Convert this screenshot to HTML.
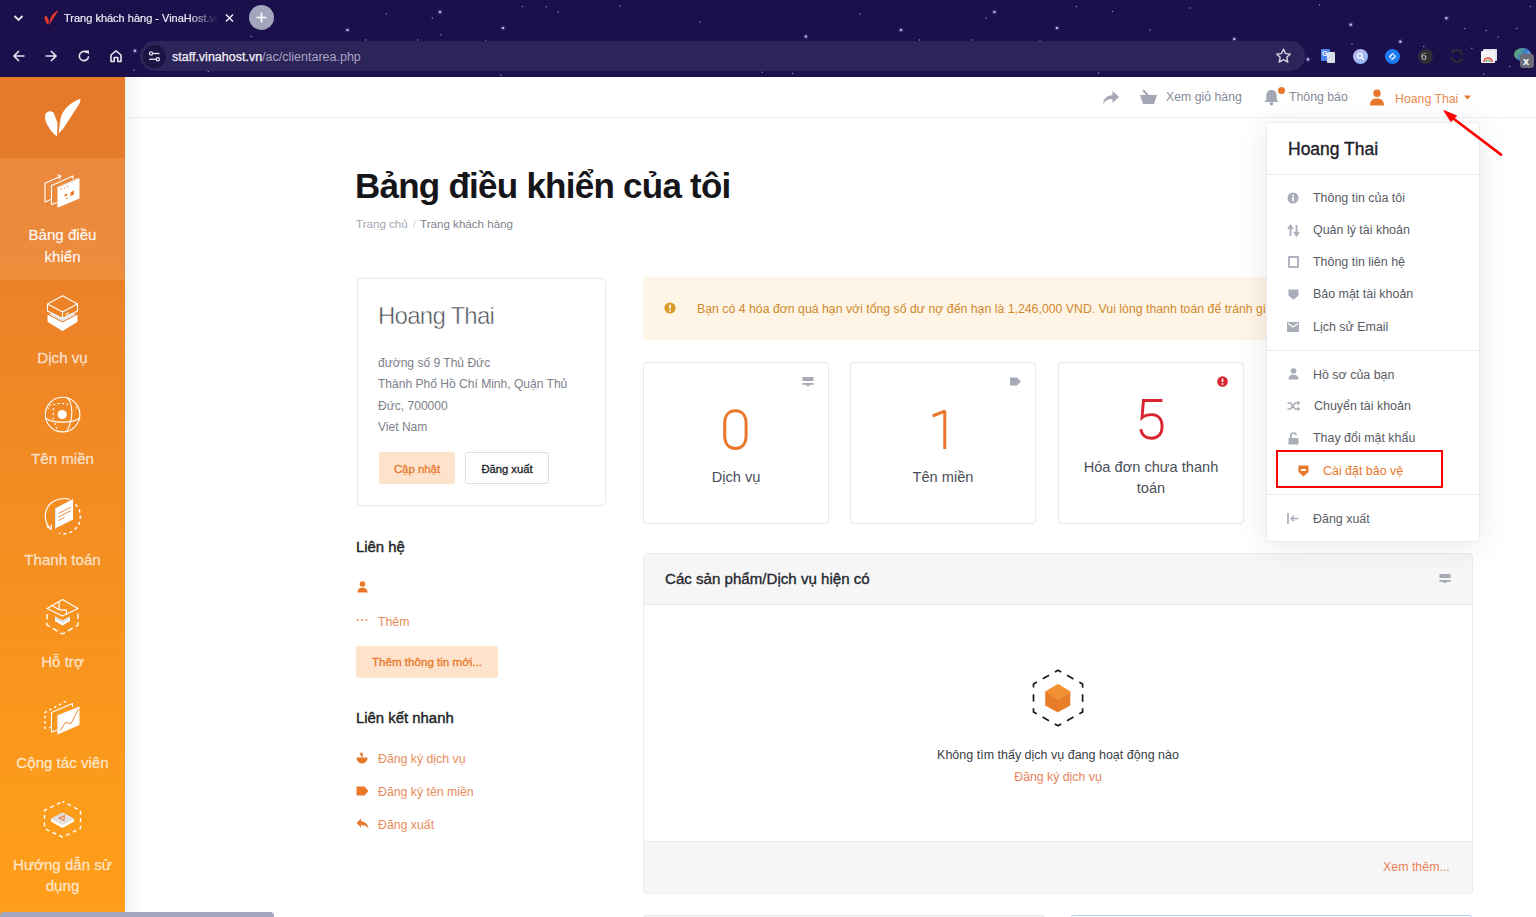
<!DOCTYPE html>
<html><head><meta charset="utf-8">
<style>
*{box-sizing:border-box;margin:0;padding:0}
html,body{width:1536px;height:917px;overflow:hidden;background:#fff;font-family:"Liberation Sans",sans-serif;position:relative}
.a{position:absolute}
.nw{white-space:nowrap}
svg{display:block}
/* chrome */
#chrome{left:0;top:0;width:1536px;height:77px;background:#1b104b}
#omni{left:140px;top:41px;width:1165px;height:30px;border-radius:15px;background:#2d2459}
/* sidebar */
#side{left:0;top:77px;width:125px;height:840px;background:linear-gradient(#e77a2c 0px,#ec8128 200px,#f38c22 420px,#fc9a1b 700px,#ff9e19 840px)}
.sl{left:0;width:125px;text-align:center;color:rgba(255,255,255,.72);-webkit-text-stroke:.35px rgba(255,255,255,.55);font-size:15.1px;line-height:22px;white-space:nowrap}
/* header */
#hdr{left:125px;top:77px;width:1411px;height:41px;background:#fff;border-bottom:1px solid #eceef2}
.ht{font-size:12.3px;color:#868a98;line-height:14px}
.card{border:1px solid #e9eaee;border-radius:4px;background:#fff;position:absolute;box-shadow:0 0 1.5px rgba(60,70,90,.07)}
.t12{font-size:12px}
</style></head><body>
<!-- ============ BROWSER CHROME ============ -->
<div id="chrome" class="a"></div>
<!-- stars --><svg class="a" style="left:0;top:0" width="1536" height="77"><g fill="#3a3580" opacity=".8"><circle cx="440" cy="12" r="2.6"/><circle cx="347.5" cy="30" r="2.6"/><circle cx="503" cy="28" r="2.6"/><circle cx="901" cy="30" r="2.6"/><circle cx="994.4" cy="12" r="2.6"/><circle cx="1056.9" cy="28" r="2.6"/><circle cx="1350.8" cy="24.7" r="2.6"/><circle cx="1446.4" cy="18.2" r="2.6"/><circle cx="1400.3" cy="41.7" r="2.6"/><circle cx="1234.3" cy="39" r="2.6"/><circle cx="1307.9" cy="59.4" r="2.6"/><circle cx="805.9" cy="36.5" r="2.6"/><circle cx="134.9" cy="50.8" r="2.6"/></g><g fill="#d8dcff"><circle cx="440" cy="12" r="1.1"/><circle cx="347.5" cy="30" r="1.1"/><circle cx="503" cy="28" r="1.1"/><circle cx="901" cy="30" r="1.1"/><circle cx="994.4" cy="12" r="1.1"/><circle cx="1056.9" cy="28" r="1.1"/><circle cx="1350.8" cy="24.7" r="1.1"/><circle cx="1446.4" cy="18.2" r="1.1"/><circle cx="1400.3" cy="41.7" r="1.1"/><circle cx="1234.3" cy="39" r="1.1"/><circle cx="1307.9" cy="59.4" r="1.1"/><circle cx="805.9" cy="36.5" r="1.1"/><circle cx="134.9" cy="50.8" r="1.1"/></g><g fill="#8d8ac4"><circle cx="522.5" cy="6.5" r=".75"/><circle cx="432.3" cy="18" r=".75"/><circle cx="546.3" cy="6.8" r=".75"/><circle cx="558.3" cy="11.7" r=".75"/><circle cx="441" cy="34.8" r=".75"/><circle cx="365.6" cy="40" r=".75"/><circle cx="417.7" cy="40" r=".75"/><circle cx="485.7" cy="41" r=".75"/><circle cx="386.4" cy="14" r=".75"/><circle cx="500.7" cy="74.9" r=".75"/><circle cx="762.4" cy="72.3" r=".75"/><circle cx="1319.6" cy="4.7" r=".75"/><circle cx="1464.9" cy="28.6" r=".75"/><circle cx="1486.3" cy="30.5" r=".75"/><circle cx="1516.7" cy="28.6" r=".75"/><circle cx="1530.5" cy="6.5" r=".75"/><circle cx="1352" cy="43.8" r=".75"/><circle cx="1423.8" cy="46.4" r=".75"/><circle cx="1471.9" cy="48.2" r=".75"/><circle cx="1498" cy="37" r=".75"/><circle cx="1509.7" cy="66.4" r=".75"/><circle cx="1483.6" cy="74.2" r=".75"/><circle cx="251.3" cy="36.5" r=".75"/><circle cx="208.3" cy="71.6" r=".75"/><circle cx="134" cy="70.3" r=".75"/><circle cx="1076.4" cy="6.5" r=".75"/><circle cx="986.2" cy="18" r=".75"/><circle cx="919.5" cy="40" r=".75"/><circle cx="971.6" cy="40" r=".75"/><circle cx="1040" cy="41" r=".75"/><circle cx="1112.5" cy="11.4" r=".75"/><circle cx="792.6" cy="73.5" r=".75"/><circle cx="1098.5" cy="73" r=".75"/><circle cx="1190" cy="8" r=".75"/><circle cx="620" cy="6" r=".75"/><circle cx="700" cy="22" r=".75"/><circle cx="860" cy="14" r=".75"/><circle cx="1150" cy="30" r=".75"/></g></svg>
<!-- tab strip -->
<svg class="a" style="left:13px;top:13px" width="11" height="10" viewBox="0 0 11 10"><path d="M1.5 3 L5.5 7 L9.5 3" stroke="#e8e6f2" stroke-width="1.8" fill="none"/></svg>
<svg class="a" style="left:43px;top:9px" width="16" height="17" viewBox="0 0 16 17"><path d="M1.6 9.5 C1 7.5 2.6 6.4 3.9 7.2 L6 12.6 L5.3 16 C3.6 14.5 2.2 12 1.6 9.5Z M6.4 15.7 L7.2 10.5 C8 7 10.5 4 14.3 1.8 C14.8 1.6 15 2 14.7 2.6 Z" fill="#e8392b"/></svg>
<div class="a nw" style="left:64px;top:11px;font-size:11px;color:#eceaf4;-webkit-text-stroke:.2px #eceaf4;line-height:14px;width:154px;overflow:hidden;-webkit-mask-image:linear-gradient(90deg,#000 125px,transparent 154px)">Trang khách hàng - VinaHost.vn</div>
<svg class="a" style="left:225px;top:13px" width="9" height="10" viewBox="0 0 9 10"><path d="M1 1.5 L8 8.5 M8 1.5 L1 8.5" stroke="#eceaf4" stroke-width="1.5"/></svg>
<div class="a" style="left:249px;top:5px;width:25px;height:25px;border-radius:50%;background:#a3a5bd"></div>
<svg class="a" style="left:255px;top:11px" width="13" height="13" viewBox="0 0 13 13"><path d="M6.5 1.5 V11.5 M1.5 6.5 H11.5" stroke="#fff" stroke-width="1.6"/></svg>
<!-- nav buttons -->
<svg class="a" style="left:12px;top:49px" width="14" height="14" viewBox="0 0 14 14"><path d="M12.5 7 H2 M7 2 L2 7 L7 12" stroke="#e6e4f0" stroke-width="1.6" fill="none"/></svg>
<svg class="a" style="left:44px;top:49px" width="14" height="14" viewBox="0 0 14 14"><path d="M1.5 7 H12 M7 2 L12 7 L7 12" stroke="#e6e4f0" stroke-width="1.6" fill="none"/></svg>
<svg class="a" style="left:77px;top:49px" width="14" height="14" viewBox="0 0 14 14"><path d="M11.5 7.2 A4.6 4.6 0 1 1 10 3.6" stroke="#e6e4f0" stroke-width="1.6" fill="none"/><path d="M8 1.6 L12 1.4 L11.8 5.4Z" fill="#e6e4f0"/></svg>
<svg class="a" style="left:109px;top:49px" width="14" height="14" viewBox="0 0 14 14"><path d="M2 12.5 V6 L7 1.8 L12 6 V12.5 H8.8 V8.5 H5.2 V12.5 Z" stroke="#e6e4f0" stroke-width="1.6" fill="none" stroke-linejoin="round"/></svg>
<!-- omnibox -->
<div id="omni" class="a"></div>
<div class="a" style="left:143px;top:45px;width:23px;height:23px;border-radius:50%;background:#1c1442"></div>
<svg class="a" style="left:148px;top:50px" width="13" height="13" viewBox="0 0 13 13"><g stroke="#e6e4f0" stroke-width="1.3" fill="none"><circle cx="3" cy="3.5" r="1.6"/><path d="M4.8 3.5 H11.5"/><circle cx="9.8" cy="9.3" r="1.6"/><path d="M1.2 9.3 H8"/></g></svg>
<div class="a nw" style="left:172px;top:50px;font-size:12.5px;line-height:15px;color:#f2f0f8"><span style="font-weight:400;-webkit-text-stroke:.25px #f2f0f8">staff.vinahost.vn</span><span style="color:#a8a4c4">/ac/clientarea.php</span></div>
<svg class="a" style="left:1275px;top:48px" width="17" height="16" viewBox="0 0 17 16"><path d="M8.5 1.2 L10.6 5.6 L15.4 6.1 L11.8 9.3 L12.8 14.1 L8.5 11.6 L4.2 14.1 L5.2 9.3 L1.6 6.1 L6.4 5.6Z" stroke="#d8d6e4" stroke-width="1.4" fill="none" stroke-linejoin="round"/></svg>
<!-- extension icons -->
<div class="a" style="left:1321px;top:49px;width:9px;height:12px;background:#4b86f0;border-radius:1px"></div>
<div class="a" style="left:1327px;top:52px;width:8px;height:11px;background:#d9dee6;border-radius:1px"></div>
<div class="a nw" style="left:1322px;top:50px;font-size:7px;color:#fff;font-weight:700">G</div>
<div class="a" style="left:1353px;top:49px;width:15px;height:15px;border-radius:50%;background:linear-gradient(135deg,#c4b8f4,#8ab6f4)"></div>
<svg class="a" style="left:1356px;top:52px" width="9" height="9" viewBox="0 0 9 9"><circle cx="3.8" cy="3.8" r="2.4" stroke="#fff" stroke-width="1.2" fill="none"/><path d="M5.6 5.6 L8 8" stroke="#fff" stroke-width="1.3"/></svg>
<div class="a" style="left:1385px;top:49px;width:15px;height:15px;border-radius:50%;background:#1a7cf0"></div>
<svg class="a" style="left:1388px;top:52px" width="9" height="9" viewBox="0 0 9 9"><path d="M5.5 1.2 L2.2 4 C1.4 4.8 2.3 6 3.2 5.3 M3.5 7.8 L6.8 5 C7.6 4.2 6.7 3 5.8 3.7" stroke="#fff" stroke-width="1.3" fill="none"/></svg>
<div class="a" style="left:1418px;top:49px;width:15px;height:15px;border-radius:50%;background:#2f2d35"></div>
<div class="a nw" style="left:1421px;top:50px;font-size:11px;color:#d0d0d0;line-height:13px;font-family:'Liberation Serif',serif">6</div>
<svg class="a" style="left:1449px;top:48px" width="16" height="16" viewBox="0 0 16 16"><path d="M13.2 7 A5.3 5.3 0 0 0 3.5 4.5 M2.8 9 A5.3 5.3 0 0 0 12.5 11.5" stroke="#2c2c32" stroke-width="2" fill="none"/><path d="M1.5 3 L5.5 2.5 L4.5 6.5Z M14.5 13 L10.5 13.5 L11.5 9.5Z" fill="#2c2c32"/></svg>
<div class="a" style="left:1483px;top:49px;width:14px;height:12px;background:#e4e4e8;border-radius:1px"></div>
<div class="a" style="left:1481px;top:51px;width:14px;height:12px;background:#f4f4f6;border-radius:1px"></div>
<svg class="a" style="left:1483px;top:55px" width="10" height="7" viewBox="0 0 10 7"><path d="M1 7 A4 4 0 0 1 9 7" stroke="#e84a3a" stroke-width="1.6" fill="none"/><path d="M3 7 A2 2 0 0 1 7 7" stroke="#3c9a4e" stroke-width="1.2" fill="none"/></svg>
<div class="a" style="left:1514px;top:48px;width:17px;height:13px;border-radius:50%;background:linear-gradient(120deg,#6fbf5a,#3b78c8 60%,#d8d8d8)"></div>
<div class="a" style="left:1520px;top:54px;width:14px;height:14px;border-radius:3px;background:#6d6d78"></div>
<div class="a nw" style="left:1523px;top:54px;font-size:11px;line-height:14px;color:#fff;font-weight:700">x</div>

<!-- ============ SIDEBAR ============ -->
<div id="side" class="a"></div>
<div class="a" style="left:0;top:77px;width:125px;height:81px;background:#e67a2b"></div>
<div class="a" style="left:0;top:158px;width:125px;height:122px;background:rgba(255,255,255,.09)"></div>

<!-- logo -->
<svg class="a" style="left:20px;top:85px" width="85" height="75" viewBox="0 0 85 75">
<path d="M25.5 29 C27 26 31 25.5 33.5 27.5 L37.5 38 L37 51.5 C31 47 26.5 40 25 33.5 Z" fill="#fff"/>
<path d="M38.5 48.5 L40.5 34 C42 27 46 22 52 18 C55 15.8 58.5 14.4 60 14 C61 14.6 60.4 16.5 59.5 18.5 L43 44 Z" fill="#fff"/>
</svg>
<!-- dashboard icon -->
<svg class="a" style="left:40px;top:170px" width="45" height="42" viewBox="0 0 45 42">
<g stroke="#fff" stroke-width="1.1" fill="none" stroke-linejoin="round">
<path d="M11 29.5 L5 32 V13.3 L20.5 6.2"/><path d="M17.5 4.8 L20.8 6 L19 9"/>
<path d="M17.5 32.2 L11.5 34.5 V15.5 L33 6 V9.2"/>
</g>
<path d="M17.5 18 L39.5 8.5 V28.5 L17.5 37.8 Z" fill="#fff"/>
<path d="M39.5 8.5 L38 8 L16.5 17.5 L17.5 18Z" fill="#eef2f6"/>
<g fill="#e97d2c"><circle cx="21.3" cy="19.3" r=".7"/><circle cx="24.4" cy="17.9" r=".7"/><circle cx="27.5" cy="16.5" r=".7"/>
<path d="M24.5 24.5 L27 23.4 V25.6 L24.5 26.7Z"/><path d="M30.5 22.2 L34 20.6 V24.6 L30.5 26.2Z"/><path d="M26 28 L27.5 27.4 V28.7 L26 29.3Z"/></g>
</svg>
<!-- services icon -->
<svg class="a" style="left:40px;top:290px" width="45" height="46" viewBox="0 0 45 46">
<path d="M7.5 24.8 L22.5 32.5 L37.5 24.8 V31.8 L22.5 41 L7.5 31.8 Z" fill="#fff"/>
<path d="M9 24.5 L22.5 31.5 L36 24.5 L33 23 L22.5 28.5 L12 23Z" fill="#dde1e8"/>
<g stroke="#fff" stroke-width="1.1" fill="none" stroke-linejoin="round">
<path d="M22.5 5.8 L37.5 14 V21 L22.5 28.5 L7.5 21 V14 Z"/><path d="M7.5 14 L22.5 22 L37.5 14"/><path d="M22.5 22 V28.5"/><path d="M25.5 24.5 L29 22.7"/>
</g>
</svg>
<!-- domain icon -->
<svg class="a" style="left:40px;top:392px" width="45" height="46" viewBox="0 0 45 46">
<g stroke="#fff" stroke-width="1.1" fill="none">
<circle cx="22.6" cy="22.6" r="17.3"/>
<path d="M5.5 26 C12 31.5 33 31.5 39.8 26"/>
<path d="M27 5.6 C33 11 34 27 26.5 39.8"/>
<path d="M13.2 13 C18 10.8 24 11 29 13" stroke-dasharray="2.2 2.2"/>
<path d="M13.3 16 V28" stroke-dasharray="2.2 2.5"/>
<path d="M8 17 C9 14.6 10.6 12.6 12.6 11.2" stroke-dasharray="1.6 2"/>
<path d="M35.5 15.5 C37 16.2 38 17 38.5 18" stroke-dasharray="1.6 2"/>
<path d="M15 31 C15.6 34 16.5 37 18 39" stroke-dasharray="2 2"/>
</g>
<circle cx="22.2" cy="22.6" r="4.6" fill="#fff"/>
</svg>
<!-- billing icon -->
<svg class="a" style="left:40px;top:492px" width="45" height="46" viewBox="0 0 45 46">
<g stroke="#fff" stroke-width="1.2" fill="none">
<path d="M29.5 7.2 C18 4.5 7 10.5 5.5 21.5 C4.6 28 7 33.5 11 37"/>
<path d="M6.5 34 L11 37.3 L11.5 32.5"/>
<path d="M35.5 12.5 C40 17 41.5 24 39.5 30.5 C37.5 36 33 40 27 41.5 C24 42 21.5 41.8 19 41" stroke-width="1.6" stroke-dasharray="3 3.2"/>
</g>
<path d="M15 16.5 L33 7 V27.5 L15 36.5 Z" fill="#fff"/>
<path d="M15 16.5 L16 17 V36 L15 36.5Z" fill="#dfe8f0"/>
<g stroke="#f08a3c" stroke-width="1"><path d="M18.5 21.5 L31 15"/><path d="M18.5 25 L31 18.5"/><path d="M18.5 28.5 L24.5 25.3"/></g>
</svg>
<!-- support icon -->
<svg class="a" style="left:40px;top:594px" width="45" height="46" viewBox="0 0 45 46">
<path d="M15 22.5 L22.5 26.5 L30 22.5 V27 L22.5 31.5 L15 27Z" fill="#fff"/>
<path d="M15 22.5 L22.5 26.5 L30 22.5 V24.8 L22.5 28.8 L15 24.8Z" fill="#dde2e8"/>
<g stroke="#fff" stroke-width="1.2" fill="none" stroke-linejoin="round">
<path d="M7 14.5 L22.5 5.5 L38 14.5 L22.5 22 Z"/>
<path d="M12 11.6 L19.2 15.8 L19 7.6"/><path d="M19.2 15.8 L26.5 16.2 V20.3"/>
<path d="M7 17 V31 L22.5 40 L38 31 V17" stroke-width="1.4" stroke-dasharray="5.5 3.3" stroke-dashoffset="5.8"/>
</g>
</svg>
<!-- affiliate icon -->
<svg class="a" style="left:40px;top:695px" width="45" height="46" viewBox="0 0 45 46">
<g stroke="#fff" stroke-width="1.1" fill="none" stroke-linejoin="round">
<path d="M5 34 V17.5 L26.5 6" stroke-width="1.5" stroke-dasharray="2.4 3"/>
<path d="M9 33 L11.5 32"/>
<path d="M17 35 L11.5 37.3 V17.5 L32.5 8.5 V12"/>
</g>
<path d="M17.5 20.2 L39.5 11.5 V30 L17.5 39.5 Z" fill="#fff"/>
<path d="M17.5 20.2 L18.5 20.5 V39 L17.5 39.5Z" fill="#dfe6ee"/>
<path d="M20.2 35.5 L25.5 27.5 L31 28.5 L38.5 14" stroke="#f08a3c" stroke-width="1" fill="none"/>
</svg>
<!-- guide icon -->
<svg class="a" style="left:40px;top:796px" width="45" height="46" viewBox="0 0 45 46">
<g stroke="#fff" stroke-width="1.1" fill="none" stroke-linejoin="round">
<path d="M22.5 5.5 L40.5 14.5 V32.5 L22.5 41 L4.5 32.5 V14.5 Z" stroke-width="1.4" stroke-dasharray="4 3.45" stroke-dashoffset="2"/>
</g>
<path d="M11 22.5 L22.5 28.5 L34 22.5 V25.5 L22.5 32 L11 25.5Z" fill="#fff"/>
<path d="M11 22.5 L22.5 16.5 L34 22.5 L22.5 28.5Z" fill="#dfe3e8"/>
<path d="M19.2 22.3 L24.3 19.6 L24 24.5Z" fill="none" stroke="#f07a2c" stroke-width="1.1"/>
</svg>
<!-- labels -->
<div class="a sl" style="top:223.5px;color:rgba(255,255,255,.95)">Bảng điều<br>khiển</div>
<div class="a sl" style="top:347px">Dịch vụ</div>
<div class="a sl" style="top:448px">Tên miền</div>
<div class="a sl" style="top:549px">Thanh toán</div>
<div class="a sl" style="top:650.5px">Hỗ trợ</div>
<div class="a sl" style="top:752px">Cộng tác viên</div>
<div class="a sl" style="top:854px;line-height:21px">Hướng dẫn sử<br>dụng</div>


<!-- ============ HEADER ============ -->
<div id="hdr" class="a"></div>

<!-- sidebar shadow on content -->
<div class="a" style="left:125px;top:77px;width:22px;height:840px;background:linear-gradient(90deg,rgba(0,0,0,.045),rgba(0,0,0,0))"></div>
<!-- share -->
<svg class="a" style="left:1102px;top:90px" width="18" height="15" viewBox="0 0 18 15"><path d="M1 14 C1.5 8 5.5 5.2 10.5 5.2 V1 L17 7 L10.5 13 V9 C6.5 9 3.5 10 1 14Z" fill="#a4a8b5"/></svg>
<!-- basket -->
<svg class="a" style="left:1139px;top:89px" width="19" height="16" viewBox="0 0 19 16"><path d="M4 1 L9 6.5" stroke="#a4a8b5" stroke-width="2"/><path d="M1 6 H18 L15 15 H4 Z" fill="#a4a8b5"/></svg>
<div class="a ht nw" style="left:1166px;top:90px">Xem giỏ hàng</div>
<!-- bell -->
<svg class="a" style="left:1263px;top:88px" width="17" height="18" viewBox="0 0 17 18"><path d="M8.5 2 C5 2 3.3 4.6 3.3 7.6 V11.5 L1.5 14 H15.5 L13.7 11.5 V7.6 C13.7 4.6 12 2 8.5 2Z" fill="#a4a8b5"/><circle cx="8.5" cy="15.8" r="1.8" fill="#a4a8b5"/></svg>
<div class="a" style="left:1277.5px;top:86.8px;width:7px;height:7px;border-radius:50%;background:#e9782a"></div>
<div class="a ht nw" style="left:1289px;top:90px">Thông báo</div>
<!-- user -->
<svg class="a" style="left:1369px;top:89px" width="16" height="17" viewBox="0 0 16 17"><circle cx="8" cy="4.2" r="3.7" fill="#e9782a"/><path d="M1 16.5 C1 11.5 4 9.6 8 9.6 C12 9.6 15 11.5 15 16.5Z" fill="#e9782a"/></svg>
<div class="a ht nw" style="left:1395px;top:92px;color:#e98a4e">Hoang Thai</div>
<svg class="a" style="left:1464px;top:95px" width="7" height="5" viewBox="0 0 7 5"><path d="M0 0.5 H7 L3.5 4.5Z" fill="#e9782a"/></svg>



<!-- title -->
<div class="a nw" style="left:355px;top:166px;font-size:35px;letter-spacing:-0.75px;line-height:40px;font-weight:700;color:#16161a">Bảng điều khiển của tôi</div>
<div class="a nw" style="left:356px;top:217px;font-size:11.6px;line-height:14px;color:#7f828c"><span style="color:#a3a6ae">Trang chủ</span><span style="color:#d4d6dc;margin:0 4px 0 5px">/</span>Trang khách hàng</div>

<!-- profile card -->
<div class="card" style="left:357px;top:278px;width:249px;height:228px"></div>
<div class="a nw" style="left:378px;top:303px;font-size:24px;letter-spacing:-0.75px;line-height:26px;color:#4a4e58;-webkit-text-stroke:.5px #fff">Hoang Thai</div>
<div class="a nw" style="left:378px;top:353px;font-size:12.05px;line-height:21.3px;color:#7d808a">đường số 9 Thủ Đức<br>Thành Phố Hồ Chí Minh, Quận Thủ<br>Đức, 700000<br>Viet Nam</div>
<div class="a" style="left:379px;top:452px;width:76px;height:32px;border-radius:3px;background:#fde3cc"></div>
<div class="a nw" style="left:379px;top:462px;width:76px;text-align:center;font-size:11.4px;line-height:14px;color:#e9782a;-webkit-text-stroke:.3px #e9782a">Cập nhật</div>
<div class="a" style="left:465px;top:452px;width:84px;height:32px;border-radius:3px;border:1px solid #dcdde0;background:#fff"></div>
<div class="a nw" style="left:465px;top:462px;width:84px;text-align:center;font-size:11.2px;line-height:14px;color:#26282e;-webkit-text-stroke:.35px #26282e">Đăng xuất</div>

<!-- contacts -->
<div class="a nw" style="left:356px;top:539px;font-size:14.9px;line-height:16px;color:#222428;-webkit-text-stroke:.4px #222428">Liên hệ</div>
<svg class="a" style="left:357px;top:581px" width="11" height="12" viewBox="0 0 11 12"><circle cx="5.5" cy="3" r="2.8" fill="#e9782a"/><path d="M0.5 11.5 C0.5 8 2.5 6.8 5.5 6.8 C8.5 6.8 10.5 8 10.5 11.5Z" fill="#e9782a"/></svg>
<svg class="a" style="left:356px;top:618px" width="13" height="4" viewBox="0 0 13 4"><g fill="#e9905a"><circle cx="1.5" cy="2" r="1"/><circle cx="6" cy="2" r="1"/><circle cx="10.5" cy="2" r="1"/></g></svg>
<div class="a nw" style="left:378px;top:615px;font-size:12.3px;line-height:14px;color:#e98c5c">Thêm</div>
<div class="a" style="left:356px;top:646px;width:142px;height:32px;border-radius:3px;background:#fde3cc"></div>
<div class="a nw" style="left:356px;top:655px;width:142px;text-align:center;font-size:11.6px;line-height:14px;color:#e9782a;-webkit-text-stroke:.3px #e9782a">Thêm thông tin mới...</div>

<!-- quick links -->
<div class="a nw" style="left:356px;top:710px;font-size:14.9px;line-height:16px;color:#222428;-webkit-text-stroke:.4px #222428">Liên kết nhanh</div>
<svg class="a" style="left:356px;top:752px" width="12" height="12" viewBox="0 0 12 12"><path d="M4 1 L6.5 5 M6 0.5 V4.5" stroke="#e9782a" stroke-width="1.4"/><path d="M0.5 5.5 H11.5 C11.5 9 9 11.5 6 11.5 C3 11.5 0.5 9 0.5 5.5Z" fill="#e9782a"/></svg>
<div class="a nw" style="left:378px;top:752px;font-size:12.3px;line-height:14px;color:#e98c5c">Đăng ký dịch vụ</div>
<svg class="a" style="left:356px;top:786px" width="13" height="10" viewBox="0 0 13 10"><path d="M0.5 0.5 H8.5 L12.5 5 L8.5 9.5 H0.5Z" fill="#e9782a"/></svg>
<div class="a nw" style="left:378px;top:785px;font-size:12.3px;line-height:14px;color:#e98c5c">Đăng ký tên miền</div>
<svg class="a" style="left:356px;top:818px" width="13" height="12" viewBox="0 0 13 12"><path d="M5 0.5 L0.5 5 L5 9.5 V7 C8.5 7 11 8 12.5 11 C12 6.5 9.5 3.5 5 3.2Z" fill="#e9782a"/></svg>
<div class="a nw" style="left:378px;top:818px;font-size:12.3px;line-height:14px;color:#e98c5c">Đăng xuất</div>

<!-- alert -->
<div class="a" style="left:643px;top:277px;width:830px;height:63px;border-radius:4px;background:#fef5e6"></div>
<svg class="a" style="left:664px;top:302px" width="12" height="12" viewBox="0 0 12 12"><circle cx="6" cy="6" r="5.6" fill="#d99a2b"/><path d="M6 2.8 V6.6" stroke="#fff" stroke-width="1.8"/><circle cx="6" cy="8.8" r="1" fill="#fff"/></svg>
<div class="a nw" style="left:697px;top:302px;font-size:12.3px;line-height:14px;color:#d2882e">Bạn có 4 hóa đơn quá hạn với tổng số dư nợ đến hạn là 1,246,000 VND. Vui lòng thanh toán để tránh gián đoạn dịch vụ.</div>

<!-- stat cards -->
<div class="card" style="left:643px;top:362px;width:186px;height:162px"></div>
<div class="card" style="left:850px;top:362px;width:186px;height:162px"></div>
<div class="card" style="left:1058px;top:362px;width:186px;height:162px"></div>
<svg class="a" style="left:802px;top:377px" width="12" height="9" viewBox="0 0 12 9"><rect x="0.5" y="0" width="11" height="4" rx=".5" fill="#a7abb8"/><rect x="0.5" y="6" width="11" height="1.8" fill="#a7abb8"/><ellipse cx="6" cy="8" rx="2.2" ry="1" fill="#a7abb8"/></svg>
<svg class="a" style="left:1010px;top:377px" width="11" height="9" viewBox="0 0 11 9"><path d="M0 0.5 H7 L11 4.5 L7 8.5 H0Z" fill="#a7abb8"/></svg>
<svg class="a" style="left:1217px;top:376px" width="11" height="11" viewBox="0 0 11 11"><circle cx="5.5" cy="5.5" r="5.3" fill="#d9232e"/><path d="M5.5 2.5 V6" stroke="#fff" stroke-width="1.7"/><circle cx="5.5" cy="8" r=".95" fill="#fff"/></svg>
<svg class="a" style="left:700px;top:390px" width="560" height="70" viewBox="700 390 560 70">
<path d="M735.4 410.7 C742.2 410.7 746.1 415.5 746.1 423.5 V435.6 C746.1 443.6 742.2 448.4 735.4 448.4 C728.6 448.4 724.7 443.6 724.7 435.6 V423.5 C724.7 415.5 728.6 410.7 735.4 410.7 Z" stroke="#e9782a" stroke-width="3" fill="none"/>
<path d="M944.8 448.9 V411.2 L932.6 416" stroke="#e9782a" stroke-width="3" fill="none" stroke-linejoin="bevel"/>
<path d="M1162.4 400.5 H1143.5 L1142 417.6 C1144.5 415.5 1148 414.6 1152 414.6 C1158.5 414.6 1162.1 419.5 1162.1 426.6 C1162.1 433.8 1158.3 438.3 1151.5 438.3 C1145.5 438.3 1141.5 434.8 1140.8 429.3" stroke="#d9232e" stroke-width="2.9" fill="none" stroke-linejoin="miter"/>
</svg>
<div class="a nw" style="left:643px;top:469px;width:186px;text-align:center;font-size:14.6px;line-height:17px;color:#4a4e5a">Dịch vụ</div>
<div class="a nw" style="left:850px;top:469px;width:186px;text-align:center;font-size:14.6px;line-height:17px;color:#4a4e5a">Tên miền</div>
<div class="a nw" style="left:1058px;top:457px;width:186px;text-align:center;font-size:14.6px;line-height:21.2px;color:#4a4e5a">Hóa đơn chưa thanh<br>toán</div>

<!-- products panel -->
<div class="a" style="left:643px;top:553px;width:830px;height:341px;border:1px solid #ebebeb;border-radius:4px;background:#fff;overflow:hidden">
  <div class="a" style="left:0;top:0;width:828px;height:51px;background:#f6f6f6;border-bottom:1px solid #eaeaea"></div>
  <div class="a" style="left:0;top:287px;width:828px;height:53px;background:#f6f6f6;border-top:1px solid #ebebeb"></div>
</div>
<div class="a nw" style="left:665px;top:571px;font-size:15.1px;line-height:16px;color:#26282e;-webkit-text-stroke:.35px #26282e">Các sản phẩm/Dịch vụ hiện có</div>
<svg class="a" style="left:1439px;top:574px" width="12" height="9" viewBox="0 0 12 9"><rect x="0.5" y="0" width="11" height="4" rx=".5" fill="#a7abb8"/><rect x="0.5" y="6" width="11" height="1.8" fill="#a7abb8"/><ellipse cx="6" cy="8" rx="2.2" ry="1" fill="#a7abb8"/></svg>
<svg class="a" style="left:1020px;top:660px" width="75" height="75" viewBox="0 0 75 75">
<path d="M38 10.2 L62.6 24 V52 L38 65.8 L13.5 52 V24 Z" fill="none" stroke="#1a1a1a" stroke-width="1.7" stroke-dasharray="7.4 6.67" stroke-dashoffset="3.7" stroke-linejoin="round"/>
<path d="M38 24.1 L50.3 31.5 L38 39.7 L25.4 31.5Z" fill="#f39234" stroke="#f39234" stroke-width=".4"/>
<path d="M25.4 31.5 L38 39.7 V52.3 L25.4 45.4Z" fill="#e77b28" stroke="#e77b28" stroke-width=".4"/>
<path d="M50.3 31.5 L38 39.7 V52.3 L50.3 45.4Z" fill="#e8802a"/>
</svg>
<div class="a nw" style="left:643px;top:748px;width:830px;text-align:center;font-size:12.5px;line-height:14px;color:#3a3d46">Không tìm thấy dịch vụ đang hoạt động nào</div>
<div class="a nw" style="left:643px;top:770px;width:830px;text-align:center;font-size:12.3px;line-height:14px;color:#e9835a">Đăng ký dịch vụ</div>
<div class="a nw" style="left:1383px;top:860px;font-size:12.4px;line-height:14px;color:#e9835a">Xem thêm...</div>

<!-- next panels -->
<div class="a" style="left:643px;top:915px;width:402px;height:10px;border:1px solid #e6e6e6;border-radius:4px;background:#f6f6f6"></div>
<div class="a" style="left:1070px;top:915px;width:403px;height:10px;border:1px solid #b9d1fa;border-radius:4px;background:#fff"></div>



<!-- dropdown -->
<div class="a" style="left:1266px;top:122px;width:214px;height:420px;border-radius:5px;background:#fff;border:1px solid #ececef;box-shadow:0 4px 30px rgba(40,40,60,.10)"></div>
<div class="a nw" style="left:1288px;top:139px;font-size:17.5px;line-height:20px;color:#1e2026;-webkit-text-stroke:.35px #1e2026">Hoang Thai</div>
<div class="a" style="left:1267px;top:174px;width:212px;height:1px;background:#ebecef"></div>
<div class="a" style="left:1267px;top:350px;width:212px;height:1px;background:#ebecef"></div>
<div class="a" style="left:1267px;top:494px;width:212px;height:1px;background:#ebecef"></div>
<style>.di{position:absolute;left:1313px;font-size:12.45px;line-height:14px;color:#585b64;white-space:nowrap}</style>
<div class="di" style="top:191px">Thông tin của tôi</div>
<div class="di" style="top:223px">Quản lý tài khoản</div>
<div class="di" style="top:255px">Thông tin liên hệ</div>
<div class="di" style="top:287px">Bảo mật tài khoản</div>
<div class="di" style="top:320px">Lịch sử Email</div>
<div class="di" style="top:368px">Hồ sơ của bạn</div>
<div class="di" style="top:399px;left:1314px">Chuyển tài khoản</div>
<div class="di" style="top:431px">Thay đổi mật khẩu</div>
<div class="di" style="top:464px;left:1323px;color:#e9782a">Cài đặt bảo vệ</div>
<div class="di" style="top:512px">Đăng xuất</div>
<!-- dropdown icons -->
<svg class="a" style="left:1287px;top:192px" width="12" height="12" viewBox="0 0 12 12"><circle cx="6" cy="6" r="5.5" fill="#a9adb9"/><circle cx="6" cy="3.4" r=".95" fill="#fff"/><path d="M6 5 V9.3" stroke="#fff" stroke-width="1.7"/></svg>
<svg class="a" style="left:1287px;top:224px" width="13" height="13" viewBox="0 0 13 13"><path d="M3.5 12 V3 M1 5 L3.5 1.5 L6 5" stroke="#a9adb9" stroke-width="1.8" fill="none"/><path d="M9.5 1 V10 M7 8 L9.5 11.5 L12 8" stroke="#a9adb9" stroke-width="1.8" fill="none"/></svg>
<svg class="a" style="left:1288px;top:256px" width="11" height="12" viewBox="0 0 11 12"><rect x="1" y="1" width="9" height="10" stroke="#a9adb9" stroke-width="1.8" fill="none"/></svg>
<svg class="a" style="left:1288px;top:289px" width="11" height="11" viewBox="0 0 11 11"><path d="M0.5 0.5 H10.5 V6.5 L5.5 10.8 L0.5 6.5Z" fill="#a9adb9"/></svg>
<svg class="a" style="left:1287px;top:322px" width="12" height="10" viewBox="0 0 12 10"><rect x="0" y="0" width="12" height="10" fill="#a9adb9"/><path d="M1 1.5 L6 5 L11 1.5" stroke="#fff" stroke-width="1.2" fill="none"/></svg>
<svg class="a" style="left:1288px;top:368px" width="11" height="12" viewBox="0 0 11 12"><circle cx="5.5" cy="3" r="2.8" fill="#a9adb9"/><path d="M0.5 11.5 C0.5 8 2.5 6.8 5.5 6.8 C8.5 6.8 10.5 8 10.5 11.5Z" fill="#a9adb9"/></svg>
<svg class="a" style="left:1287px;top:400px" width="14" height="12" viewBox="0 0 14 12"><path d="M0.5 3 H3.5 L8 9 H11.5 M0.5 9 H3.5 L8 3 H11.5" stroke="#a9adb9" stroke-width="1.6" fill="none"/><path d="M10.5 0.5 L13.5 3 L10.5 5.5Z M10.5 6.5 L13.5 9 L10.5 11.5Z" fill="#a9adb9"/></svg>
<svg class="a" style="left:1288px;top:432px" width="11" height="13" viewBox="0 0 11 13"><path d="M2.8 6 V3.8 C2.8 2 4 1 5.5 1 C7 1 8.2 2 8.2 3.6" stroke="#a9adb9" stroke-width="1.6" fill="none"/><rect x="0.5" y="6" width="10" height="6.5" rx=".8" fill="#a9adb9"/></svg>
<svg class="a" style="left:1298px;top:465px" width="11" height="12" viewBox="0 0 11 12"><path d="M0.5 0.5 H10.5 V7 L5.5 11.5 L0.5 7Z" fill="#e9782a"/><rect x="3" y="4" width="5" height="2" fill="#fff"/></svg>
<svg class="a" style="left:1287px;top:512px" width="12" height="13" viewBox="0 0 12 13"><path d="M1 1 V12" stroke="#a9adb9" stroke-width="1.7"/><path d="M11.5 6.5 H4.5 M7 3.8 L4.2 6.5 L7 9.2" stroke="#a9adb9" stroke-width="1.5" fill="none"/></svg>
<!-- red highlight box -->
<div class="a" style="left:1276px;top:450px;width:167px;height:38px;border:2px solid #f00"></div>
<!-- red arrow -->
<svg class="a" style="left:1430px;top:100px" width="80" height="65" viewBox="0 0 80 65">
<path d="M71 54.6 L20 16" stroke="#ff0000" stroke-width="2.6" stroke-linecap="round"/>
<path d="M13.8 10.6 L26.5 15.8 L21 21.6 Z" fill="#ff0000" stroke="#ff0000" stroke-width="1" stroke-linejoin="round"/>
</svg>


<!-- scrollbar -->
<div class="a" style="left:0;top:912px;width:274px;height:8px;border-radius:4px;background:#a4a6bd"></div>
</body></html>
